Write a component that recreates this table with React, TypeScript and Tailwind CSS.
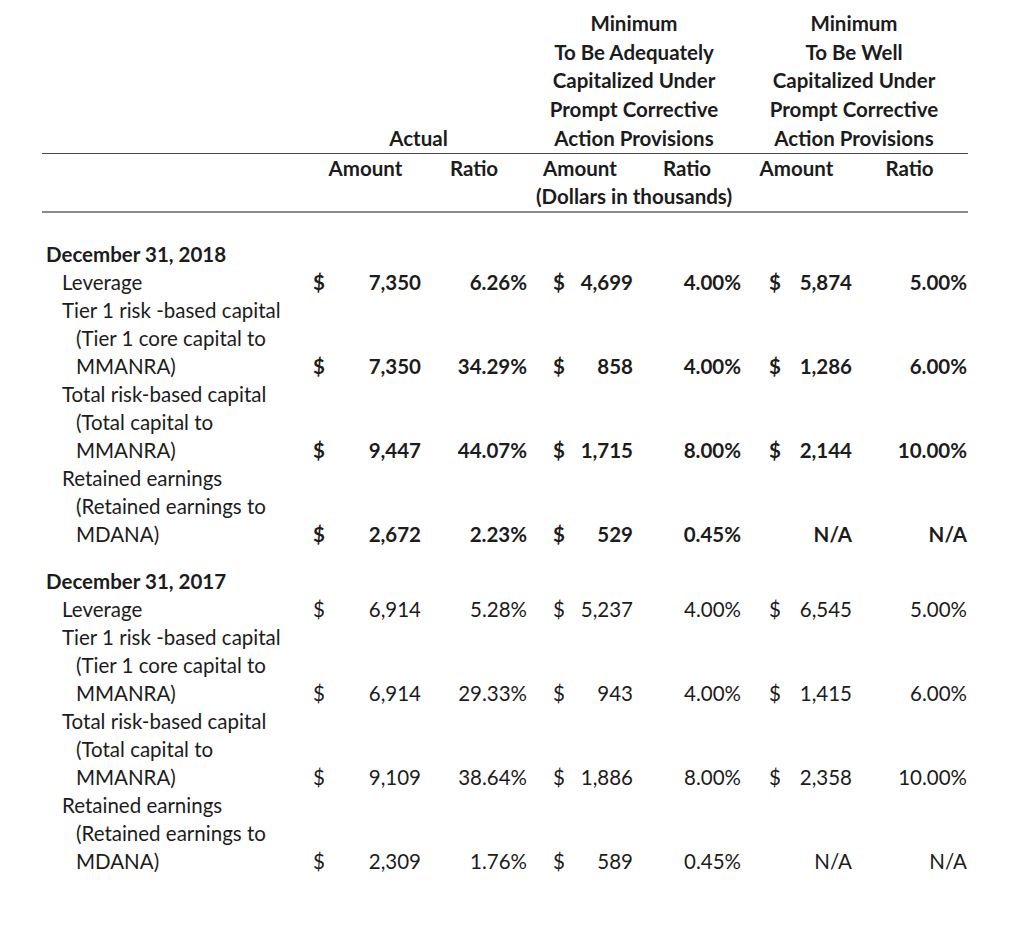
import React from 'react'

type Row = {
  label: string[]
  actual: [string, string]
  adequate: [string, string]
  well: [string, string]
}

const rows2018: Row[] = [
  { label: ['Leverage'], actual: ['7,350', '6.26%'], adequate: ['4,699', '4.00%'], well: ['5,874', '5.00%'] },
  { label: ['Tier 1 risk -based capital', '(Tier 1 core capital to', 'MMANRA)'], actual: ['7,350', '34.29%'], adequate: ['858', '4.00%'], well: ['1,286', '6.00%'] },
  { label: ['Total risk-based capital', '(Total capital to', 'MMANRA)'], actual: ['9,447', '44.07%'], adequate: ['1,715', '8.00%'], well: ['2,144', '10.00%'] },
  { label: ['Retained earnings', '(Retained earnings to', 'MDANA)'], actual: ['2,672', '2.23%'], adequate: ['529', '0.45%'], well: ['N/A', 'N/A'] },
]

const rows2017: Row[] = [
  { label: ['Leverage'], actual: ['6,914', '5.28%'], adequate: ['5,237', '4.00%'], well: ['6,545', '5.00%'] },
  { label: ['Tier 1 risk -based capital', '(Tier 1 core capital to', 'MMANRA)'], actual: ['6,914', '29.33%'], adequate: ['943', '4.00%'], well: ['1,415', '6.00%'] },
  { label: ['Total risk-based capital', '(Total capital to', 'MMANRA)'], actual: ['9,109', '38.64%'], adequate: ['1,886', '8.00%'], well: ['2,358', '10.00%'] },
  { label: ['Retained earnings', '(Retained earnings to', 'MDANA)'], actual: ['2,309', '1.76%'], adequate: ['589', '0.45%'], well: ['N/A', 'N/A'] },
]

const cols = 'grid grid-cols-[268px_20px_91px_106px_43px_63px_108px_44px_67px_115px]'

function Section({ title, rows, bold }: { title: string; rows: Row[]; bold: boolean }) {
  return (
    <div className={`${cols} leading-[28px] ${bold ? 'font-bold' : ''}`}>
      <div className="col-span-10 pl-[4px] font-bold">{title}</div>
      {rows.map((r, i) => {
        const last = r.label.length - 1
        const isNA = r.well[0] === 'N/A'
        return (
          <React.Fragment key={i}>
            {r.label.slice(0, last).map((l, j) => (
              <div key={j} className={`col-span-10 font-normal ${j === 0 ? 'pl-[20px]' : 'pl-[34px]'}`}>{l}</div>
            ))}
            <div className={`font-normal ${last === 0 ? 'pl-[20px]' : 'pl-[34px]'}`}>{r.label[last]}</div>
            <div className="pl-[3px]">$</div>
            <div className="text-right tabular-nums">{r.actual[0]}</div>
            <div className="text-right tabular-nums">{r.actual[1]}</div>
            <div className="pl-[26px]">$</div>
            <div className="text-right tabular-nums">{r.adequate[0]}</div>
            <div className="text-right tabular-nums">{r.adequate[1]}</div>
            <div className="pl-[28px]">{isNA ? '' : '$'}</div>
            <div className="text-right tabular-nums">{r.well[0]}</div>
            <div className="text-right tabular-nums">{r.well[1]}</div>
          </React.Fragment>
        )
      })}
    </div>
  )
}

export default function App() {
  return (
    <div className="w-[1024px] h-[926px] bg-white text-[#1c1c1c] text-[20.5px] font-['Lato',sans-serif]">
      <div className="pl-[42px] pt-[9px]">
        <div className={`${cols} font-bold leading-[28.7px] w-[926px]`}>
          <div className="col-span-1" />
          <div className="col-span-3 self-end text-center">Actual</div>
          <div className="col-span-3 text-center">
            <div>Minimum</div>
            <div>To Be Adequately</div>
            <div>Capitalized Under</div>
            <div>Prompt Corrective</div>
            <div>Action Provisions</div>
          </div>
          <div className="col-span-3 text-center">
            <div>Minimum</div>
            <div>To Be Well</div>
            <div>Capitalized Under</div>
            <div>Prompt Corrective</div>
            <div>Action Provisions</div>
          </div>
        </div>
        <div className={`${cols} font-bold leading-[28.7px] w-[926px] border-t border-[#4a4a4a] border-b-2 border-b-[#8c8c8c]`}>
          <div />
          <div className="col-span-2 text-center">Amount</div>
          <div className="text-center">Ratio</div>
          <div className="col-span-2 text-center">Amount</div>
          <div className="text-center">Ratio</div>
          <div className="col-span-2 text-center">Amount</div>
          <div className="text-center">Ratio</div>
          <div className="col-span-4" />
          <div className="col-span-3 text-center">(Dollars in thousands)</div>
          <div className="col-span-3" />
        </div>
        <div className="pt-[27px]">
          <Section title="December 31, 2018" rows={rows2018} bold />
        </div>
        <div className="pt-[19px]">
          <Section title="December 31, 2017" rows={rows2017} bold={false} />
        </div>
      </div>
    </div>
  )
}
